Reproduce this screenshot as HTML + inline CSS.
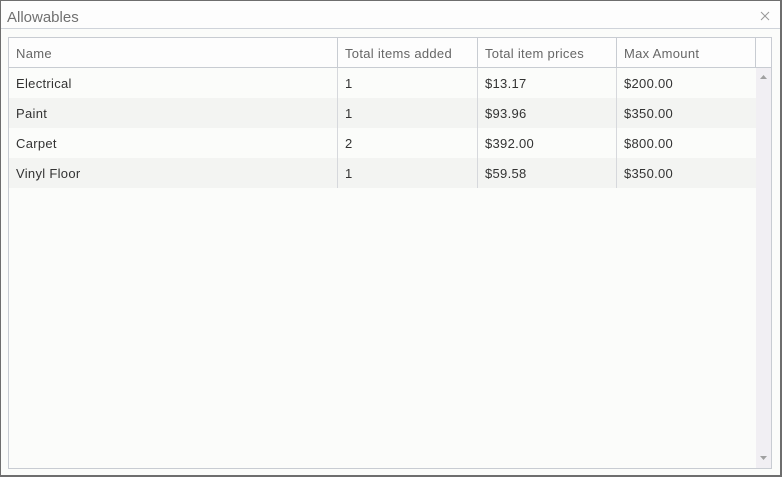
<!DOCTYPE html>
<html><head><style>
*{margin:0;padding:0;box-sizing:border-box}
body{width:782px;height:477px;background:#fff;font-family:"Liberation Sans","DejaVu Sans",sans-serif;font-size:13px;letter-spacing:0.3px;color:#333;overflow:hidden}
.win{position:absolute;left:0;top:0;width:782px;height:477px;border:1px solid #6e6e6e;border-bottom-width:2px;border-right-width:2px;background:#fbfcfa}
.title{position:absolute;left:0;top:0;width:779px;height:28px;border-bottom:1px solid #cfd3da;background:#fdfdfd}
.title span{position:absolute;left:6px;top:8px;font-size:15px;letter-spacing:0;color:#707070}
.x{position:absolute;left:759px;top:10px;width:10px;height:10px}
.grid{position:absolute;left:7px;top:36px;width:764px;height:432px;border:1px solid #c8ccd2;background:#fbfcfa}
.hdr{position:absolute;left:0;top:0;width:762px;height:30px;border-bottom:1px solid #c8ccd2;background:#fdfdfd}
.c{position:absolute;top:0;height:30px;line-height:32px;padding-left:7px;color:#333;white-space:nowrap}
.hdr .c{color:#666;border-right:1px solid #c8ccd2}
.row{position:absolute;left:0;width:747px;height:30px}
.row .c{border-right:1px solid #d6d8dc}
.alt{background:#f3f4f2}
.sb{position:absolute;left:747px;top:30px;width:15px;height:400px;background:#f1eff3}
</style></head><body>
<div class="win">
<div class="title"><span>Allowables</span>
<svg class="x" viewBox="0 0 10 10"><path d="M1 1L9 9M9 1L1 9" stroke="#999" stroke-width="1"/></svg></div>
<div class="grid">
<div class="hdr">
<div class="c" style="left:0;width:329px">Name</div>
<div class="c" style="left:329px;width:140px">Total items added</div>
<div class="c" style="left:469px;width:139px">Total item prices</div>
<div class="c" style="left:608px;width:139px">Max Amount</div>
</div>
<div class="row" style="top:30px"><div class="c" style="left:0;width:329px">Electrical</div><div class="c" style="left:329px;width:140px">1</div><div class="c" style="left:469px;width:139px">$13.17</div><div class="c" style="left:608px;width:139px;border:none">$200.00</div></div>
<div class="row alt" style="top:60px"><div class="c" style="left:0;width:329px">Paint</div><div class="c" style="left:329px;width:140px">1</div><div class="c" style="left:469px;width:139px">$93.96</div><div class="c" style="left:608px;width:139px;border:none">$350.00</div></div>
<div class="row" style="top:90px"><div class="c" style="left:0;width:329px">Carpet</div><div class="c" style="left:329px;width:140px">2</div><div class="c" style="left:469px;width:139px">$392.00</div><div class="c" style="left:608px;width:139px;border:none">$800.00</div></div>
<div class="row alt" style="top:120px"><div class="c" style="left:0;width:329px">Vinyl Floor</div><div class="c" style="left:329px;width:140px">1</div><div class="c" style="left:469px;width:139px">$59.58</div><div class="c" style="left:608px;width:139px;border:none">$350.00</div></div>
<div class="sb">
<svg style="position:absolute;left:4px;top:7px" width="7" height="4"><path d="M0 4L3.5 0L7 4Z" fill="#a0a0a0"/></svg>
<svg style="position:absolute;left:4px;top:388px" width="7" height="4"><path d="M0 0L7 0L3.5 4Z" fill="#a0a0a0"/></svg>
</div>
</div>
</div>
</body></html>
